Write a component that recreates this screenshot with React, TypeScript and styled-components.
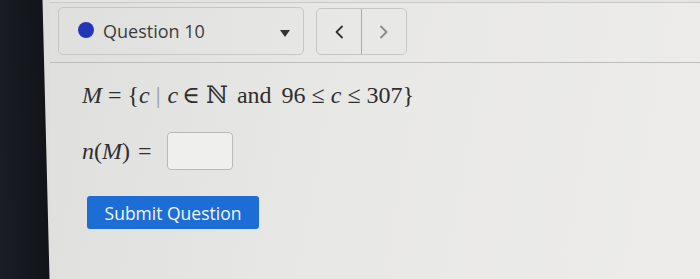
import React from "react";
import styled, { createGlobalStyle } from "styled-components";

const Global = createGlobalStyle`
  html, body { margin: 0; padding: 0; }
  body { width: 700px; height: 279px; overflow: hidden; background: #e4e4e2; }
`;

const Frame = styled.div`
  display: flex;
  width: 700px;
  height: 279px;
  overflow: hidden;
`;

const Bezel = styled.div`
  flex: 0 0 50px;
  height: 100%;
  background: linear-gradient(88.56deg, #1a1d23 0px, #111419 49px, #dedfdd 50px);
`;

const Screen = styled.div`
  flex: 1;
  display: flex;
  flex-direction: column;
  background: linear-gradient(100deg, #dfdfdd 0%, #e8e8e6 45%, #edecea 100%);
  border-top: 1px solid #c9c9c7;
  margin-top: 2px;
`;

const Header = styled.div`
  display: flex;
  align-items: flex-start;
  gap: 12px;
  padding: 4px 0 0 8px;
  height: 60px;
  border-bottom: 1.5px solid #bdbdbb;
  box-sizing: border-box;
`;

const Dropdown = styled.div`
  width: 246px;
  height: 48px;
  box-sizing: border-box;
  border: 1.5px solid #c6c6c4;
  border-radius: 5px;
  display: flex;
  align-items: center;
  padding: 0 13px 0 19px;
`;

const Dot = styled.span`
  width: 16px;
  height: 16px;
  border-radius: 50%;
  background: #2336b8;
  margin-right: 9px;
  margin-top: -2px;
`;

const QLabel = styled.span`
  font-family: "Open Sans", "Liberation Sans", sans-serif;
  font-size: 18px;
  color: #3c3c3c;
  flex: 1;
  margin-top: -1px;
`;

const Caret = styled.span`
  width: 0;
  height: 0;
  border-left: 5px solid transparent;
  border-right: 5px solid transparent;
  border-top: 7px solid #333;
  margin-top: 4px;
`;

const Nav = styled.div`
  display: flex;
  width: 91px;
  height: 47px;
  margin-top: 1px;
  box-sizing: border-box;
  border: 1.5px solid #c6c6c4;
  border-radius: 5px;
`;

const NavBtn = styled.div<{ $divider?: boolean; $dim?: boolean }>`
  flex: 1;
  display: flex;
  align-items: center;
  justify-content: center;
  border-right: ${(p) => (p.$divider ? "1.5px solid #a9a9a7" : "none")};
  color: ${(p) => (p.$dim ? "#8a8a8a" : "#333")};
`;

const Content = styled.div`
  display: flex;
  flex-direction: column;
  padding: 18px 0 0 32px;
`;

const MathLine = styled.div`
  display: flex;
  align-items: baseline;
  font-family: "Liberation Serif", "DejaVu Serif", serif;
  font-size: 24px;
  color: #2e2e2e;
  white-space: pre;
  line-height: 28px;
`;

const V = styled.span`
  font-style: italic;
`;

const Op = styled.span<{ $l?: number; $r?: number }>`
  margin-left: ${(p) => p.$l ?? 6}px;
  margin-right: ${(p) => p.$r ?? 6}px;
`;

const Bar = styled.span`
  color: #9a9a9a;
  margin: 0 7px 0 6px;
`;

const Word = styled.span`
  margin: 0 10px 0 9px;
`;

const AnswerRow = styled.div`
  display: flex;
  align-items: center;
  margin-top: 23px;
`;

const AnswerBox = styled.div`
  width: 66px;
  height: 38px;
  box-sizing: border-box;
  border: 1.5px solid #b9b9b7;
  border-radius: 4px;
  background: #efefed;
  margin-left: 15px;
`;

const Submit = styled.button`
  align-self: flex-start;
  margin: 26px 0 0 5px;
  width: 172px;
  height: 33px;
  border: none;
  border-radius: 3px;
  background: #1c6dd6;
  color: #f4f7fb;
  font-family: "Open Sans", "Liberation Sans", sans-serif;
  font-size: 17.5px;
  padding: 0;
  cursor: pointer;
`;

const Chevron = ({ dir }: { dir: "l" | "r" }) => (
  <svg width="10" height="14" viewBox="0 0 10 14">
    <path
      d={dir === "l" ? "M8 1.5 L2.5 7 L8 12.5" : "M2 1.5 L7.5 7 L2 12.5"}
      fill="none"
      stroke="currentColor"
      strokeWidth="1.8"
      strokeLinecap="round"
      strokeLinejoin="round"
    />
  </svg>
);

export default function App() {
  return (
    <>
      <Global />
      <Frame>
        <Bezel />
        <Screen>
          <Header>
            <Dropdown>
              <Dot />
              <QLabel>Question 10</QLabel>
              <Caret />
            </Dropdown>
            <Nav>
              <NavBtn $divider>
                <Chevron dir="l" />
              </NavBtn>
              <NavBtn $dim>
                <Chevron dir="r" />
              </NavBtn>
            </Nav>
          </Header>
          <Content>
            <MathLine>
              <V>M</V>
              <Op>=</Op>
              <span>{"{"}</span>
              <V>c</V>
              <Bar>|</Bar>
              <V>c</V>
              <Op $l={4} $r={6}>∈</Op>
              <span>ℕ</span>
              <Word>and</Word>
              <span>96</span>
              <Op>≤</Op>
              <V>c</V>
              <Op>≤</Op>
              <span>307</span>
              <span>{"}"}</span>
            </MathLine>
            <AnswerRow>
              <MathLine>
                <V>n</V>
                <span>(</span>
                <V>M</V>
                <span>)</span>
                <Op $l={8} $r={0}>=</Op>
              </MathLine>
              <AnswerBox />
            </AnswerRow>
            <Submit>Submit Question</Submit>
          </Content>
        </Screen>
      </Frame>
    </>
  );
}
